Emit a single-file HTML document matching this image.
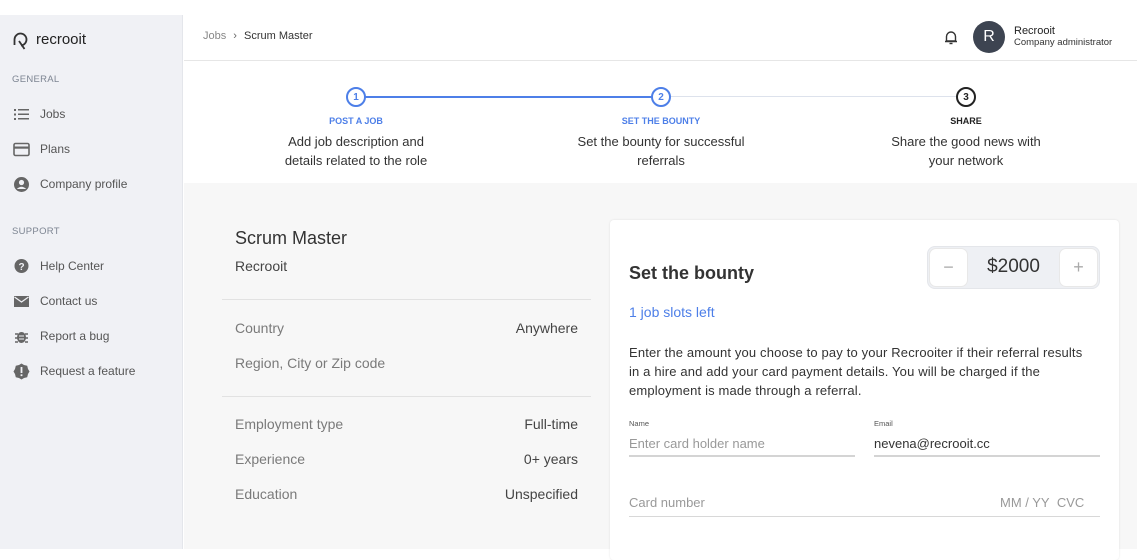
<!DOCTYPE html>
<html><head><meta charset="utf-8"><style>
*{margin:0;padding:0;box-sizing:border-box}
body{width:1137px;height:549px;overflow:hidden;background:#fff;font-family:"Liberation Sans",Arial,sans-serif;position:relative;color:#333}
.a{position:absolute;white-space:nowrap}
.side{position:absolute;left:0;top:15px;width:183px;height:534px;background:#f0f1f5;border-right:1px solid #e4e6eb}
.sec{font-size:9.5px;color:#7d8592;letter-spacing:.3px}
.item{font-size:12px;color:#555}
.ic{position:absolute;left:13px;width:17px;height:17px}
.gray{position:absolute;left:184px;top:183px;width:953px;height:366px;background:#f7f7f7}
.lbl{font-size:14px;color:#7a7a7a}
.val{font-size:14px;color:#444;text-align:right;right:559px}
.hr{position:absolute;left:222px;width:369px;height:1px;background:#e2e2e2}
.step{font-size:9px;font-weight:bold;color:#4d7fe8;transform:translateX(-50%)}
.desc{font-size:13px;color:#333;text-align:center;line-height:19px;transform:translateX(-50%)}
.circ{position:absolute;width:20px;height:20px;border-radius:50%;border:2px solid #4d7fe8;background:#fff;font-size:10px;font-weight:bold;color:#4d7fe8;text-align:center;line-height:17px}
</style></head><body>
<div class="side"></div>
<svg class="a" style="left:12px;top:31px" width="18" height="20" viewBox="0 0 18 20"><path d="M2.5 14 V8.5 A6 6 0 1 1 9 14.5" fill="none" stroke="#333" stroke-width="1.8"/><path d="M7 10 L12.5 18" stroke="#333" stroke-width="1.8" fill="none"/></svg>
<div class="a" style="left:36px;top:31px;font-size:15px;color:#222">recrooit</div>
<div class="a sec" style="left:12px;top:74px">GENERAL</div>
<svg class="ic" style="top:106px" viewBox="0 0 17 17"><g fill="#666"><rect x="1" y="3" width="2" height="2"/><rect x="1" y="7.5" width="2" height="2"/><rect x="1" y="12" width="2" height="2"/><rect x="5" y="3" width="11" height="1.5"/><rect x="5" y="7.5" width="11" height="1.5"/><rect x="5" y="12" width="11" height="1.5"/></g></svg>
<div class="a item" style="left:40px;top:107px">Jobs</div>
<svg class="ic" style="top:141px" viewBox="0 0 17 17"><rect x="1" y="2.5" width="15" height="12" rx="1.5" fill="none" stroke="#666" stroke-width="1.6"/><rect x="1" y="5.5" width="15" height="2.2" fill="#666"/></svg>
<div class="a item" style="left:40px;top:142px">Plans</div>
<svg class="ic" style="top:176px" viewBox="0 0 17 17"><circle cx="8.5" cy="8.5" r="7.5" fill="#666"/><circle cx="8.5" cy="6.5" r="2.6" fill="#f0f1f5"/><path d="M3.8 13 Q8.5 8.5 13.2 13" fill="#f0f1f5"/></svg>
<div class="a item" style="left:40px;top:177px">Company profile</div>
<div class="a sec" style="left:12px;top:226px">SUPPORT</div>
<svg class="ic" style="top:258px" viewBox="0 0 17 17"><circle cx="8.5" cy="8" r="7" fill="#666"/><text x="8.5" y="12" font-size="10" font-weight="bold" fill="#f0f1f5" text-anchor="middle" font-family="Liberation Sans">?</text></svg>
<div class="a item" style="left:40px;top:259px">Help Center</div>
<svg class="ic" style="top:293px" viewBox="0 0 17 17"><rect x="1" y="3" width="15" height="11" fill="#666"/><path d="M1.5 4 L8.5 9 L15.5 4" fill="none" stroke="#f0f1f5" stroke-width="1.2"/></svg>
<div class="a item" style="left:40px;top:294px">Contact us</div>
<svg class="ic" style="top:328px" viewBox="0 0 17 17"><ellipse cx="8.5" cy="9.5" rx="4.5" ry="5.5" fill="#666"/><g stroke="#666" stroke-width="1.4"><path d="M2 6h3M12 6h3M2 10h3M12 10h3M2 14h3M12 14h3"/></g><path d="M6 8h5M6 11h5" stroke="#f0f1f5" stroke-width="1"/></svg>
<div class="a item" style="left:40px;top:329px">Report a bug</div>
<svg class="ic" style="top:363px" viewBox="0 0 17 17"><polygon points="8.5,0.5 11,2 14.2,2.8 15,6 16.5,8.5 15,11 14.2,14.2 11,15 8.5,16.5 6,15 2.8,14.2 2,11 0.5,8.5 2,6 2.8,2.8 6,2" fill="#666"/><rect x="7.6" y="4" width="1.8" height="6" fill="#f0f1f5"/><rect x="7.6" y="11.3" width="1.8" height="1.8" fill="#f0f1f5"/></svg>
<div class="a item" style="left:40px;top:364px">Request a feature</div>

<div class="a" style="left:203px;top:30px;font-size:11px;color:#888">Jobs <span style="color:#666;margin:0 4px">›</span> <span style="color:#333">Scrum Master</span></div>
<svg class="a" style="left:943px;top:29px" width="16" height="17" viewBox="0 0 16 17"><path d="M3.5 12 V7.5 A4.5 4.5 0 0 1 12.5 7.5 V12 Z M2 12.5 H14" fill="none" stroke="#333" stroke-width="1.4"/><path d="M6.5 14.5 H9.5" stroke="#333" stroke-width="1.4"/></svg>
<div class="a" style="left:973px;top:21px;width:32px;height:32px;border-radius:50%;background:#3d4451;color:#fff;font-size:16px;text-align:center;line-height:32px">R</div>
<div class="a" style="left:1014px;top:25px;font-size:11px;color:#222">Recrooit</div>
<div class="a" style="left:1014px;top:37px;font-size:9.5px;color:#333">Company administrator</div>
<div class="a" style="left:184px;top:60px;width:953px;height:1px;background:#e6e6e6"></div>

<div class="a" style="left:365px;top:96px;width:287px;height:1.5px;background:#4d7fe8"></div>
<div class="a" style="left:670px;top:96px;width:287px;height:1px;background:#dde2ec"></div>
<div class="circ" style="left:346px;top:87px">1</div>
<div class="circ" style="left:651px;top:87px">2</div>
<div class="circ" style="left:956px;top:87px;border-color:#222;color:#222">3</div>
<div class="a step" style="left:356px;top:116px">POST A JOB</div>
<div class="a step" style="left:661px;top:116px">SET THE BOUNTY</div>
<div class="a step" style="left:966px;top:116px;color:#222">SHARE</div>
<div class="a desc" style="left:356px;top:132px">Add job description and<br>details related to the role</div>
<div class="a desc" style="left:661px;top:132px">Set the bounty for successful<br>referrals</div>
<div class="a desc" style="left:966px;top:132px">Share the good news with<br>your network</div>

<div class="gray"></div>
<div class="a" style="left:235px;top:228px;font-size:18px;color:#333">Scrum Master</div>
<div class="a" style="left:235px;top:258px;font-size:14px;color:#444">Recrooit</div>
<div class="hr" style="top:299px"></div>
<div class="a lbl" style="left:235px;top:320px">Country</div>
<div class="a val" style="top:320px">Anywhere</div>
<div class="a lbl" style="left:235px;top:355px">Region, City or Zip code</div>
<div class="hr" style="top:396px"></div>
<div class="a lbl" style="left:235px;top:416px">Employment type</div>
<div class="a val" style="top:416px">Full-time</div>
<div class="a lbl" style="left:235px;top:451px">Experience</div>
<div class="a val" style="top:451px">0+ years</div>
<div class="a lbl" style="left:235px;top:486px">Education</div>
<div class="a val" style="top:486px">Unspecified</div>

<div class="a" style="left:610px;top:220px;width:509px;height:340px;background:#fff;border-radius:4px;box-shadow:0 0 2px rgba(0,0,0,.1)"></div>
<div class="a" style="left:629px;top:263px;font-size:18px;font-weight:bold;color:#333">Set the bounty</div>
<div class="a" style="left:927px;top:246px;width:173px;height:43px;background:#eef0f4;border-radius:8px;border:1px solid #e4e6ea"></div>
<div class="a" style="left:929px;top:248px;width:39px;height:39px;background:#fff;border-radius:7px;border:1px solid #e8e8e8;text-align:center;line-height:37px;font-size:18px;color:#aaa">−</div>
<div class="a" style="left:1059px;top:248px;width:39px;height:39px;background:#fff;border-radius:7px;border:1px solid #e8e8e8;text-align:center;line-height:37px;font-size:18px;color:#aaa">+</div>
<div class="a" style="left:968px;top:256px;width:91px;text-align:center;font-size:19px;color:#333">$2000</div>
<div class="a" style="left:629px;top:304px;font-size:14px;color:#4d7fe8">1 job slots left</div>
<div class="a" style="left:629px;top:343px;font-size:13px;line-height:19px;color:#333;letter-spacing:.15px">Enter the amount you choose to pay to your Recrooiter if their referral results<br>in a hire and add your card payment details. You will be charged if the<br>employment is made through a referral.</div>
<div class="a" style="left:629px;top:419px;font-size:7.5px;color:#555">Name</div>
<div class="a" style="left:874px;top:419px;font-size:7.5px;color:#555">Email</div>
<div class="a" style="left:629px;top:436px;font-size:13px;color:#999">Enter card holder name</div>
<div class="a" style="left:874px;top:436px;font-size:13px;color:#333">nevena@recrooit.cc</div>
<div class="a" style="left:629px;top:455px;width:226px;height:2px;background:#d4d4d4"></div>
<div class="a" style="left:874px;top:455px;width:226px;height:2px;background:#d4d4d4"></div>
<div class="a" style="left:629px;top:495px;font-size:13px;color:#999">Card number</div>
<div class="a" style="left:1000px;top:495px;font-size:13px;color:#999">MM / YY&nbsp; CVC</div>
<div class="a" style="left:629px;top:516px;width:471px;height:1px;background:#d8d8d8"></div>
</body></html>
